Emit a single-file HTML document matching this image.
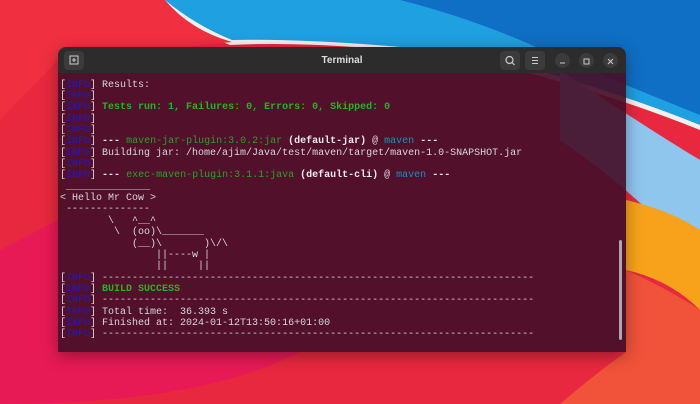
<!DOCTYPE html>
<html><head><meta charset="utf-8"><style>
html,body{margin:0;padding:0;width:700px;height:404px;overflow:hidden;background:#e82a45}
#bg{position:absolute;left:0;top:0}
.win{position:absolute;left:58px;top:47px;width:568px;height:305px;border-radius:8px 8px 0 0;overflow:hidden;box-shadow:0 4px 16px rgba(0,0,0,.35)}
.tb{height:26px;background:#2c2c2c;position:relative;color:#ddd;font:bold 10px "Liberation Sans",sans-serif;text-align:center;line-height:27px}
.body{position:absolute;top:26px;left:0;right:0;bottom:0;background:rgba(68,14,40,.92)}
.btn{position:absolute;top:4px;width:20px;height:19px;background:#3b3b3b;border-radius:4px}
.cb{position:absolute;top:6px;width:15px;height:15px;background:#3b3b3b;border-radius:50%}
pre{margin:0;position:absolute;left:2px;top:6.5px;font:10px/11.36px "Liberation Mono",monospace;color:#d8d8d8}
.i{color:#1a1ad0}.g{color:#27b327;font-weight:bold}.gn{color:#2aa02a}.c{color:#1a8fbf}.b{font-weight:bold;color:#eee}
.sb{position:absolute;right:4px;top:167px;width:3px;height:100px;background:#aaa;border-radius:2px}
</style></head><body>
<svg id="bg" width="700" height="404" viewBox="0 0 700 404">
<rect width="700" height="404" fill="#e8283f"/>
<path d="M160 0 L700 0 L700 130 Q600 90 480 60 Q330 40 230 45 Q190 30 160 0Z" fill="#f5f0f0"/>
<path d="M165 0 L700 0 L700 125 Q600 85 480 55 Q330 38 232 40 Q195 25 165 0Z" fill="#1fa0e0"/>
<path d="M400 0 L700 0 L700 115 Q600 75 520 40 Q460 15 400 0Z" fill="#0f6fc4"/>
<path d="M560 70 Q650 130 700 160 L700 270 Q660 210 560 140Z" fill="#8fc6ee"/>
<path d="M626 200 Q670 210 700 230 L700 310 Q670 280 626 270Z" fill="#f7a21a"/>
<path d="M626 270 Q670 290 700 310 L700 404 L560 404 Q600 370 626 352Z" fill="#f0523a"/>
<path d="M0 0 L165 0 Q190 30 232 42 L58 60 L0 120Z" fill="#f03040"/>
<path d="M0 250 L58 220 L58 352 L300 352 Q200 404 0 404Z" fill="#e81a55"/>
</svg>
<div class="win">
<div class="tb">Terminal
<div class="btn" style="left:6px"><svg width="20" height="19"><rect x="6" y="5" width="8" height="8" fill="none" stroke="#ccc" stroke-width="1"/><path d="M10 7v4M8 9h4" stroke="#ccc"/></svg></div>
<div class="btn" style="left:442px"><svg width="20" height="19"><circle cx="9.5" cy="9" r="3.5" fill="none" stroke="#ccc" stroke-width="1.2"/><path d="M12 11.5l2.5 2.5" stroke="#ccc" stroke-width="1.2"/></svg></div>
<div class="btn" style="left:467px"><svg width="20" height="19"><path d="M7 6.5h6M7 9.5h6M7 12.5h6" stroke="#ccc" stroke-width="1.1"/></svg></div>
<div class="cb" style="left:497px"><svg width="15" height="15"><path d="M5 9h5" stroke="#ccc"/></svg></div>
<div class="cb" style="left:521px"><svg width="15" height="15"><rect x="5" y="5" width="5" height="5" fill="none" stroke="#ccc"/></svg></div>
<div class="cb" style="left:545px"><svg width="15" height="15"><path d="M5 5l5 5M10 5l-5 5" stroke="#ccc"/></svg></div>
</div>
<div class="body">
<pre>[<span class="i">INFO</span>] Results:
[<span class="i">INFO</span>]
[<span class="i">INFO</span>] <span class="g">Tests run: 1, Failures: 0, Errors: 0, Skipped: 0</span>
[<span class="i">INFO</span>]
[<span class="i">INFO</span>]
[<span class="i">INFO</span>] <span class="b">---</span> <span class="gn">maven-jar-plugin:3.0.2:jar</span> <span class="b">(default-jar)</span> @ <span class="c">maven</span> <span class="b">---</span>
[<span class="i">INFO</span>] Building jar: /home/ajim/Java/test/maven/target/maven-1.0-SNAPSHOT.jar
[<span class="i">INFO</span>]
[<span class="i">INFO</span>] <span class="b">---</span> <span class="gn">exec-maven-plugin:3.1.1:java</span> <span class="b">(default-cli)</span> @ <span class="c">maven</span> <span class="b">---</span>
 ______________
&lt; Hello Mr Cow &gt;
 --------------
        \   ^__^
         \  (oo)\_______
            (__)\       )\/\
                ||----w |
                ||     ||
[<span class="i">INFO</span>] ------------------------------------------------------------------------
[<span class="i">INFO</span>] <span class="g">BUILD SUCCESS</span>
[<span class="i">INFO</span>] ------------------------------------------------------------------------
[<span class="i">INFO</span>] Total time:  36.393 s
[<span class="i">INFO</span>] Finished at: 2024-01-12T13:50:16+01:00
[<span class="i">INFO</span>] ------------------------------------------------------------------------</pre>
<div class="sb"></div>
</div>
</div>
</body></html>
